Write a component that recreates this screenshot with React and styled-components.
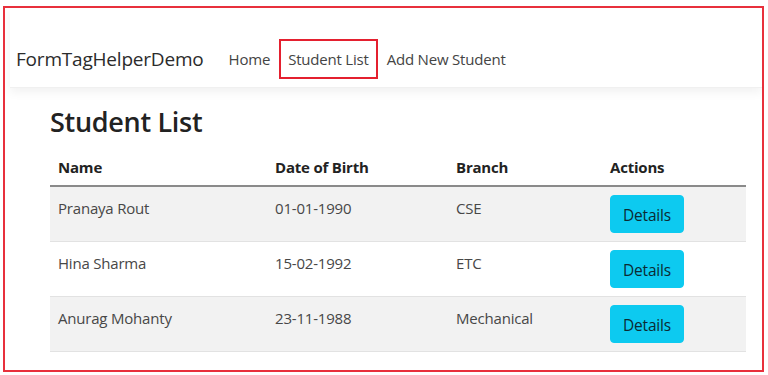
import React from "react";
import styled, { createGlobalStyle } from "styled-components";

const GlobalStyle = createGlobalStyle`
  html, body {
    margin: 0;
    padding: 0;
    background: #fff;
  }
  body {
    font-family: "Open Sans", "Noto Sans", sans-serif;
    color: #212529;
  }
`;

const Page = styled.div`
  padding: 6px 0 0 3px;
`;

const Frame = styled.div`
  width: 761px;
  height: 366px;
  box-sizing: border-box;
  border: 2px solid #e8303c;
  overflow: hidden;
`;

const NavBar = styled.nav`
  display: flex;
  align-items: center;
  margin-left: 5px;
  padding: 31px 0 8px 6px;
  background: #fff;
  box-shadow: 0 4px 10px rgba(0, 0, 0, 0.06);
  border-bottom: 1px solid #f0f0f0;
`;

const Brand = styled.a`
  font-size: 19px;
  color: #2b2b2b;
  margin-right: 16px;
  line-height: 38px;
  letter-spacing: -0.2px;
`;

const NavLink = styled.a`
  display: block;
  font-size: 15px;
  line-height: 22px;
  color: #444;
  padding: 7px 7px;
  border: 2px solid ${p => (p.active ? "#e4202f" : "transparent")};
  letter-spacing: -0.2px;
`;

const Main = styled.main`
  padding: 15px 0 0 45px;
  width: 696px;
`;

const Title = styled.h2`
  margin: 0 0 8px;
  font-size: 27px;
  font-weight: 600;
  line-height: 38px;
  color: #222;
  letter-spacing: -0.3px;
`;

const Table = styled.table`
  width: 696px;
  border-collapse: collapse;
  table-layout: fixed;
`;

const Th = styled.th`
  text-align: left;
  font-size: 15px;
  font-weight: 700;
  padding: 8px;
  line-height: 20px;
  color: #222;
  border-bottom: 2px solid #8a8a8a;
  letter-spacing: -0.2px;
`;

const Row = styled.tr`
  background: ${p => (p.striped ? "#f2f2f2" : "#fff")};
  border-bottom: 1px solid #e2e2e2;
`;

const Td = styled.td`
  padding: 8px;
  vertical-align: top;
  font-size: 15px;
  line-height: 26px;
  color: #474747;
  letter-spacing: -0.2px;
`;

const DetailsButton = styled.button`
  font-family: inherit;
  font-size: 15.5px;
  line-height: 24px;
  padding: 7px 0 5px;
  border: 1px solid #0dcaf0;
  border-radius: 4px;
  background: #0dcaf0;
  color: #0b2a33;
  width: 74px;
  height: 38px;
  cursor: pointer;
  letter-spacing: -0.2px;
`;

const students = [
  { name: "Pranaya Rout", dob: "01-01-1990", branch: "CSE" },
  { name: "Hina Sharma", dob: "15-02-1992", branch: "ETC" },
  { name: "Anurag Mohanty", dob: "23-11-1988", branch: "Mechanical" },
];

export default function App() {
  return (
    <Page>
      <GlobalStyle />
      <Frame>
        <NavBar>
          <Brand>FormTagHelperDemo</Brand>
          <NavLink>Home</NavLink>
          <NavLink active>Student List</NavLink>
          <NavLink>Add New Student</NavLink>
        </NavBar>
        <Main>
          <Title>Student List</Title>
          <Table>
            <colgroup>
              <col style={{ width: 217 }} />
              <col style={{ width: 181 }} />
              <col style={{ width: 154 }} />
              <col style={{ width: 144 }} />
            </colgroup>
            <thead>
              <tr>
                <Th>Name</Th>
                <Th>Date of Birth</Th>
                <Th>Branch</Th>
                <Th>Actions</Th>
              </tr>
            </thead>
            <tbody>
              {students.map((s, i) => (
                <Row key={s.name} striped={i % 2 === 0}>
                  <Td>{s.name}</Td>
                  <Td>{s.dob}</Td>
                  <Td>{s.branch}</Td>
                  <Td>
                    <DetailsButton>Details</DetailsButton>
                  </Td>
                </Row>
              ))}
            </tbody>
          </Table>
        </Main>
      </Frame>
    </Page>
  );
}
